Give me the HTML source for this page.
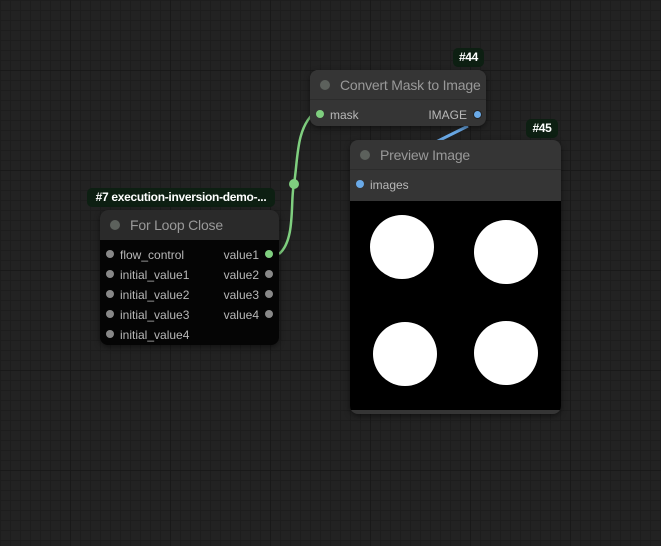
<!DOCTYPE html>
<html><head><style>
*{margin:0;padding:0;box-sizing:border-box}
body{width:661px;height:546px;overflow:hidden;position:relative;font-family:"Liberation Sans",Arial,sans-serif;
background-color:#222;
background-image:
linear-gradient(to right,#191919 1px,transparent 1px),
linear-gradient(to bottom,#191919 1px,transparent 1px),
linear-gradient(to right,#1d1d1d 1px,transparent 1px),
linear-gradient(to bottom,#1d1d1d 1px,transparent 1px);
background-size:100px 100px,100px 100px,10px 10px,10px 10px;
background-position:70px 0,0 70px,0 0,0 0;}
.a{position:absolute}
.badge{position:absolute;background:#0d1f12;color:#fff;font-weight:bold;font-size:12px;border-radius:5px;height:19px;line-height:19px;letter-spacing:-0.3px;text-align:center}
.node{position:absolute;border-radius:8px;box-shadow:0 2px 6px rgba(0,0,0,.5);overflow:hidden}
.title{height:30px;line-height:30px;color:#999;font-size:14px;letter-spacing:-0.2px;padding-left:30px;position:relative;white-space:nowrap}
.title:before{content:"";position:absolute;left:10px;top:10px;width:10px;height:10px;border-radius:50%;background:#5c615c}
.dot{position:absolute;width:8px;height:8px;border-radius:50%}
.t{position:absolute;font-size:12px;color:#b8b8b8;line-height:20px}
</style></head><body>
<svg class="a" style="left:0;top:0" width="661" height="546">
<path d="M279 254 C296 240,290 200,294 184 C298 160,296 130,313 114" stroke="#7fcf7f" stroke-width="2.5" fill="none"/>
<circle cx="294" cy="184" r="5" fill="#7fcf7f"/>
<path d="M468 126 L436 142" stroke="#6aaae8" stroke-width="3" fill="none"/>
</svg>

<div class="badge" style="left:453px;top:48px;width:31px">#44</div>
<div class="node" style="left:310px;top:70px;width:176px;height:56px;background:#353535">
 <div class="title" style="background:#353535;border-bottom:1px solid #2c2c2c">Convert Mask to Image</div>
 <div class="dot" style="left:6px;top:40px;background:#7fcf7f"></div>
 <div class="t" style="left:20px;top:35px">mask</div>
 <div class="t" style="right:19px;top:35px">IMAGE</div>
 <div class="dot" style="right:4px;top:40px;width:9px;height:9px;background:#6aaae8;border:1px solid #222"></div>
</div>

<div class="badge" style="left:526px;top:119px;width:32px">#45</div>
<div class="node" style="left:350px;top:140px;width:211px;height:274px;background:#353535">
 <div class="title" style="border-bottom:1px solid #2c2c2c">Preview Image</div>
 <div class="dot" style="left:6px;top:40px;background:#6aaae8"></div>
 <div class="t" style="left:20px;top:35px">images</div>
 <div class="a" style="left:0;top:61px;width:211px;height:209px;background:#000">
  <svg width="211" height="209"><g fill="#fff">
  <circle cx="52" cy="46" r="32"/><circle cx="156" cy="51" r="32"/>
  <circle cx="55" cy="153" r="32"/><circle cx="156" cy="152" r="32"/></g></svg>
 </div>
</div>

<div class="badge" style="left:87px;top:188px;width:188px">#7 execution-inversion-demo-...</div>
<div class="node" style="left:100px;top:210px;width:179px;height:135px;background:#050505">
 <div class="title" style="background:#2a2a2a">For Loop Close</div>
 <div class="dot" style="left:6px;top:40px;background:#888"></div><div class="t" style="left:20px;top:35px">flow_control</div>
 <div class="dot" style="left:6px;top:60px;background:#888"></div><div class="t" style="left:20px;top:55px">initial_value1</div>
 <div class="dot" style="left:6px;top:80px;background:#888"></div><div class="t" style="left:20px;top:75px">initial_value2</div>
 <div class="dot" style="left:6px;top:100px;background:#888"></div><div class="t" style="left:20px;top:95px">initial_value3</div>
 <div class="dot" style="left:6px;top:120px;background:#888"></div><div class="t" style="left:20px;top:115px">initial_value4</div>
 <div class="t" style="right:20px;top:35px">value1</div><div class="dot" style="right:6px;top:40px;background:#7fcf7f"></div>
 <div class="t" style="right:20px;top:55px">value2</div><div class="dot" style="right:6px;top:60px;background:#888"></div>
 <div class="t" style="right:20px;top:75px">value3</div><div class="dot" style="right:6px;top:80px;background:#888"></div>
 <div class="t" style="right:20px;top:95px">value4</div><div class="dot" style="right:6px;top:100px;background:#888"></div>
</div>
</body></html>
